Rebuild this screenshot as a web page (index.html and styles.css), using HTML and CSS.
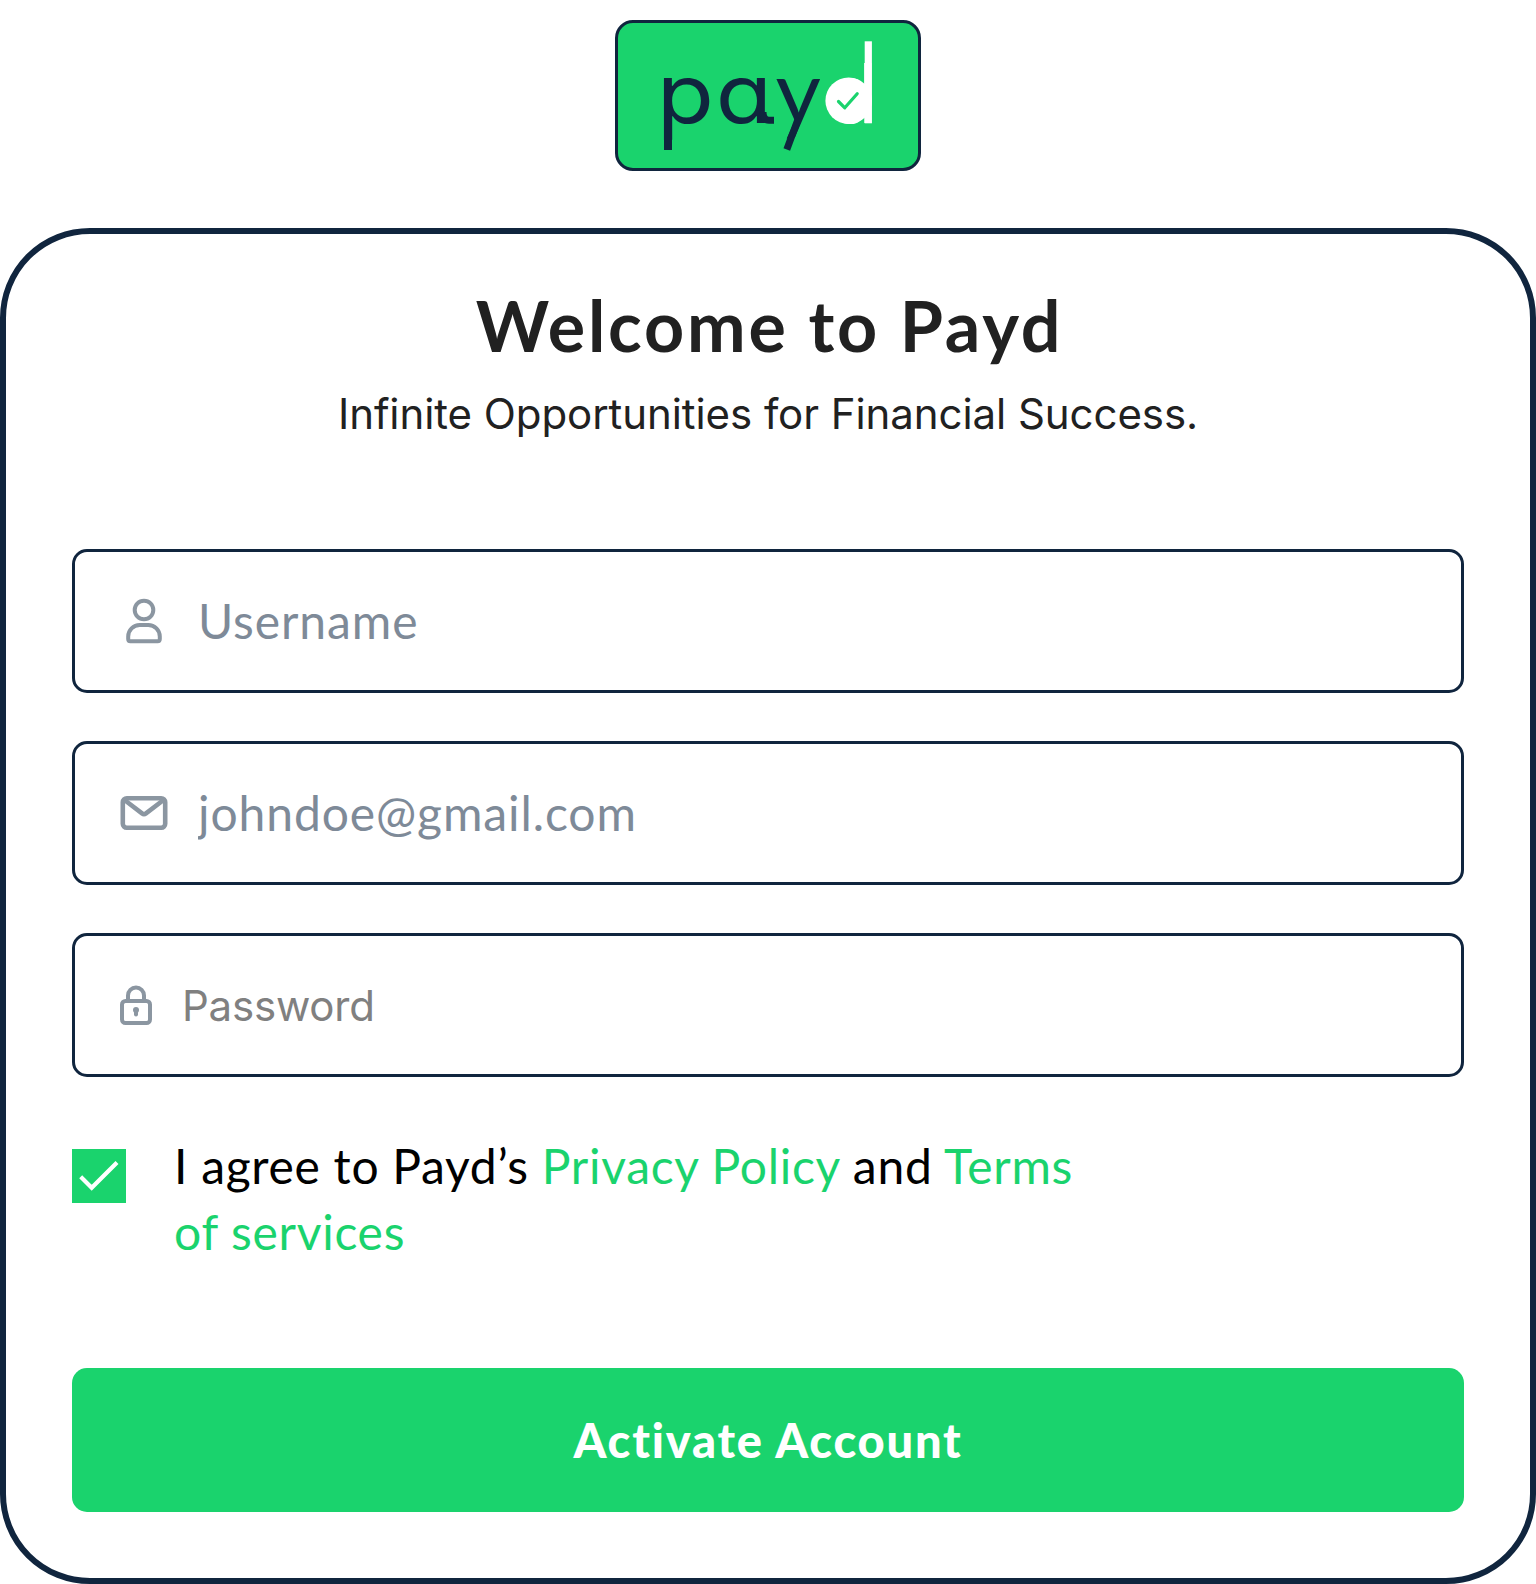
FILE: index.html
```
<!DOCTYPE html>
<html lang="en">

<head>
    <meta charset="UTF-8">
    <meta name="viewport" content="width=device-width, initial-scale=1.0">
    <title>Payd</title>

    <link rel="stylesheet" href="styles.css">
</head>

<body>
    <div class="logo">
        <svg width="300" height="145" viewBox="618 23 300 145">
            <g class="logo-text">
                <text transform="translate(656.800 123) scale(1.140 1)">p</text>
                <text transform="translate(715.800 123) scale(1.120 1)">a</text>
                <text class="logo-y" x="775.500" y="123">y</text>
                <text class="logo-d" x="827.600" y="123">d</text>
            </g>
            <!-- longer tails for the p, a and y -->
            <rect x="664" y="120" width="8" height="30" fill="#10253e" />
            <path class="tail" d="M763 112Q763 120.300 769 120.300H774M798.500 118L786.800 149.500" />
            <circle cx="848.7" cy="100.7" r="23.3" fill="#fff" />
            <rect x="864.7" y="41.3" width="7.2" height="82" fill="#fff" />
            <path d="M838.5 101.5l6.3 6.3 12.4-14" fill="none" stroke="#1ad36d" stroke-width="3.2" stroke-linecap="round" stroke-linejoin="round" />
        </svg>
    </div>

    <div class="card">
        <h1 class="title">Welcome to Payd</h1>
        <p class="subtitle">Infinite Opportunities for Financial Success.</p>

        <form class="form">
            <label class="field field-user">
                <svg width="48" height="48" viewBox="0 0 48 48">
                    <circle cx="24" cy="13" r="9.3" />
                    <path d="M8.2 42V39.5A11.5 11.5 0 0 1 19.7 28H28.3A11.5 11.5 0 0 1 39.8 39.5V42Q39.8 44.2 37.6 44.2H10.4Q8.2 44.2 8.2 42Z" />
                </svg>
                <input type="text" placeholder="Username">
            </label>
            <label class="field field-email">
                <svg width="48" height="48" viewBox="0 0 48 48">
                    <rect x="2.8" y="9.2" width="42.4" height="29.6" rx="4" />
                    <path d="M4.5 11L22 24.3Q24 25.800 26 24.300L43.500 11" />
                </svg>
                <input type="text" placeholder="johndoe@gmail.com">
            </label>
            <label class="field field-password">
                <svg width="36" height="48" viewBox="0 0 36 48">
                    <rect x="2" y="20" width="28" height="22" rx="3.500" />
                    <path d="M8 20V14.500A8 8 0 0 1 24 14.500V20" />
                    <circle class="keyhole" cx="16" cy="29" r="3" />
                    <path d="M16 30V33.500" stroke-linecap="round" />
                </svg>
                <input type="password" placeholder="Password">
            </label>

            <div class="agree">
                <span class="checkbox">
                    <svg width="54" height="54" viewBox="0 0 54 54">
                        <path d="M8.700 27.700L19.700 38.700L45 13.400" />
                    </svg>
                </span>
                <p class="agree-text">I agree to Payd’s <a>Privacy Policy</a> and <a>Terms of services</a></p>
            </div>

            <button class="button" type="button">Activate Account</button>
        </form>
    </div>
</body>

</html>
```
FILE: styles.css
```
* {
    box-sizing: border-box;
}

body {
    margin: 0;
    padding-top: 20px;
    background-color: #fff;
    font-family: Lato, sans-serif;
}

.logo {
    width: 306px;
    height: 151px;
    margin: 0 auto;
    border: 3px solid #10253e;
    border-radius: 18px;
    background-color: #1ad36d;
}

.logo svg {
    display: block;
}

.logo-text {
    font-family: Inter, sans-serif;
    font-size: 82px;
    font-feature-settings: "cv11";
    fill: #10253e;
}

.logo-text .logo-y {
    font-family: Lato, sans-serif;
    font-size: 88px;
}

.logo-text .logo-d {
    fill: #fff;
}

.tail {
    fill: none;
    stroke: #10253e;
    stroke-width: 7;
}

.card {
    height: 1356px;
    margin-top: 57px;
    padding: 52px 66px 0;
    border: 6px solid #10253e;
    border-radius: 90px;
}

.title {
    margin: 0;
    padding-left: 3px;
    font-size: 70px;
    line-height: 78px;
    font-weight: 700;
    letter-spacing: 2.8px;
    text-align: center;
    color: #212121;
}

.subtitle {
    margin: 20px 0 0;
    font-family: Inter, sans-serif;
    font-size: 42px;
    line-height: 60px;
    letter-spacing: -0.07px;
    text-align: center;
    color: #212121;
}

.form {
    display: flex;
    flex-direction: column;
    gap: 48px;
    margin-top: 105px;
}

.field {
    display: flex;
    align-items: center;
    height: 144px;
    padding-left: 45px;
    border: 3px solid #10253e;
    border-radius: 15px;
}

.field svg {
    flex: none;
    fill: none;
    stroke: #8b96a1;
    stroke-width: 4;
}

.field-email svg {
    stroke-width: 4.6;
}

.field .keyhole {
    fill: #8b96a1;
    stroke: none;
}

.field input {
    flex: 1;
    margin: 0 0 0 30px;
    padding: 0 0 2px;
    border: 0;
    outline: 0;
    background: none;
    font-family: Lato, sans-serif;
    font-size: 48px;
    letter-spacing: 0.9px;
}

.field input::placeholder {
    color: #7e8a98;
    opacity: 1;
}

.field-password input {
    margin-left: 26px;
    padding-bottom: 0;
    font-family: Inter, sans-serif;
    font-size: 42px;
    letter-spacing: -0.2px;
}

.field-password input::placeholder {
    color: #808080;
}

.agree {
    display: flex;
    align-items: flex-start;
    gap: 48px;
    margin-top: 8px;
}

.checkbox {
    width: 54px;
    height: 54px;
    margin-top: 16px;
    background-color: #1ad36d;
}

.checkbox path {
    fill: none;
    stroke: #fff;
    stroke-width: 4.2;
}

.agree-text {
    width: 920px;
    margin: 0;
    font-size: 48px;
    line-height: 66px;
    letter-spacing: 0.7px;
    color: #000;
}

.agree-text a {
    color: #1ad36d;
}

.button {
    height: 144px;
    margin-top: 55px;
    border: 0;
    border-radius: 15px;
    background-color: #1ad36d;
    font-family: Lato, sans-serif;
    font-size: 47px;
    font-weight: 900;
    letter-spacing: 1.8px;
    color: #fff;
}
```
